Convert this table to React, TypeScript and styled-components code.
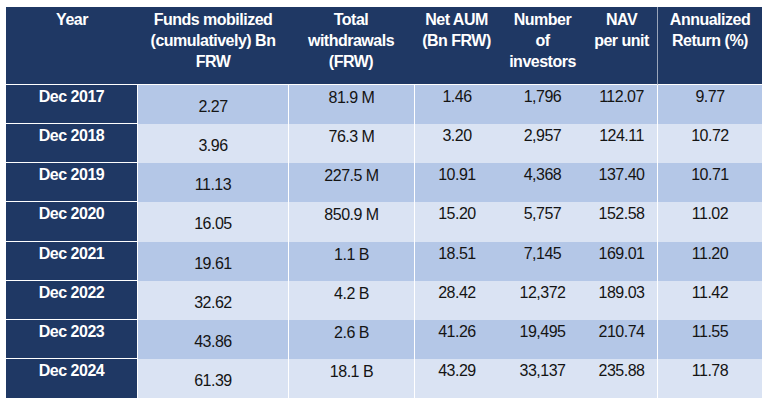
import React from "react";
import styled, { createGlobalStyle } from "styled-components";

const Global = createGlobalStyle`
  html, body { margin: 0; padding: 0; background: #ffffff; }
  body { font-family: "Liberation Sans", Arial, sans-serif; }
`;

const NAVY = "#1f3864";
const DARK_ROW = "#b4c7e7";
const LIGHT_ROW = "#dae3f3";

const Page = styled.div`
  padding: 7px 0 0 6px;
  width: 768px;
  height: 405px;
  box-sizing: border-box;
`;

const Grid = styled.div`
  display: grid;
  width: 756px;
  grid-template-columns: 132px 150px 126px 85px 87px 71px 105px;
  grid-template-rows: 78px repeat(8, 39.125px);
`;

const HeadCell = styled.div<{ $divider?: boolean }>`
  box-sizing: border-box;
  background: ${NAVY};
  color: #ffffff;
  font-weight: bold;
  font-size: 16px;
  letter-spacing: -0.5px;
  line-height: 21px;
  text-align: center;
  padding-top: 2px;
  border-bottom: 1px solid #ffffff;
  border-left: ${(p) => (p.$divider ? "1px solid rgba(255,255,255,0.55)" : "none")};
`;

const YearCell = styled.div<{ $last?: boolean }>`
  box-sizing: border-box;
  background: ${NAVY};
  color: #ffffff;
  font-weight: bold;
  font-size: 16px;
  letter-spacing: -0.5px;
  line-height: 18px;
  text-align: center;
  padding-top: 3px;
  border-right: 1px solid #ffffff;
  border-bottom: ${(p) => (p.$last ? "none" : "1px solid #ffffff")};
`;

const DataCell = styled.div<{ $dark: boolean; $divider?: boolean; $top: number }>`
  box-sizing: border-box;
  background: ${(p) => (p.$dark ? DARK_ROW : LIGHT_ROW)};
  color: #141414;
  font-size: 16px;
  letter-spacing: -0.5px;
  line-height: 18px;
  text-align: center;
  padding-top: ${(p) => p.$top}px;
  border-left: ${(p) => (p.$divider ? "1px solid #ffffff" : "none")};
`;

const headers: { lines: string[]; divider?: boolean }[] = [
  { lines: ["Year"] },
  { lines: ["Funds mobilized", "(cumulatively) Bn", "FRW"] },
  { lines: ["Total", "withdrawals", "(FRW)"] },
  { lines: ["Net AUM", "(Bn FRW)"] },
  { lines: ["Number", "of", "investors"] },
  { lines: ["NAV", "per unit"] },
  { lines: ["Annualized", "Return (%)"], divider: true },
];

const rows = [
  ["Dec 2017", "2.27", "81.9 M", "1.46", "1,796", "112.07", "9.77"],
  ["Dec 2018", "3.96", "76.3 M", "3.20", "2,957", "124.11", "10.72"],
  ["Dec 2019", "11.13", "227.5 M", "10.91", "4,368", "137.40", "10.71"],
  ["Dec 2020", "16.05", "850.9 M", "15.20", "5,757", "152.58", "11.02"],
  ["Dec 2021", "19.61", "1.1 B", "18.51", "7,145", "169.01", "11.20"],
  ["Dec 2022", "32.62", "4.2 B", "28.42", "12,372", "189.03", "11.42"],
  ["Dec 2023", "43.86", "2.6 B", "41.26", "19,495", "210.74", "11.55"],
  ["Dec 2024", "61.39", "18.1 B", "43.29", "33,137", "235.88", "11.78"],
];

// per data column (index 1..6): top padding and left divider
const colTop = [0, 13, 4, 3, 3, 3, 3];
const colDivider = [false, false, true, true, false, false, true];

export default function App() {
  return (
    <Page>
      <Global />
      <Grid>
        {headers.map((h, i) => (
          <HeadCell key={`h${i}`} $divider={h.divider}>
            {h.lines.map((l, j) => (
              <React.Fragment key={j}>
                {j > 0 && <br />}
                {l}
              </React.Fragment>
            ))}
          </HeadCell>
        ))}
        {rows.map((r, ri) => (
          <React.Fragment key={r[0]}>
            <YearCell $last={ri === rows.length - 1}>{r[0]}</YearCell>
            {r.slice(1).map((v, ci) => (
              <DataCell
                key={ci}
                $dark={ri % 2 === 0}
                $divider={colDivider[ci + 1]}
                $top={colTop[ci + 1]}
              >
                {v}
              </DataCell>
            ))}
          </React.Fragment>
        ))}
      </Grid>
    </Page>
  );
}
